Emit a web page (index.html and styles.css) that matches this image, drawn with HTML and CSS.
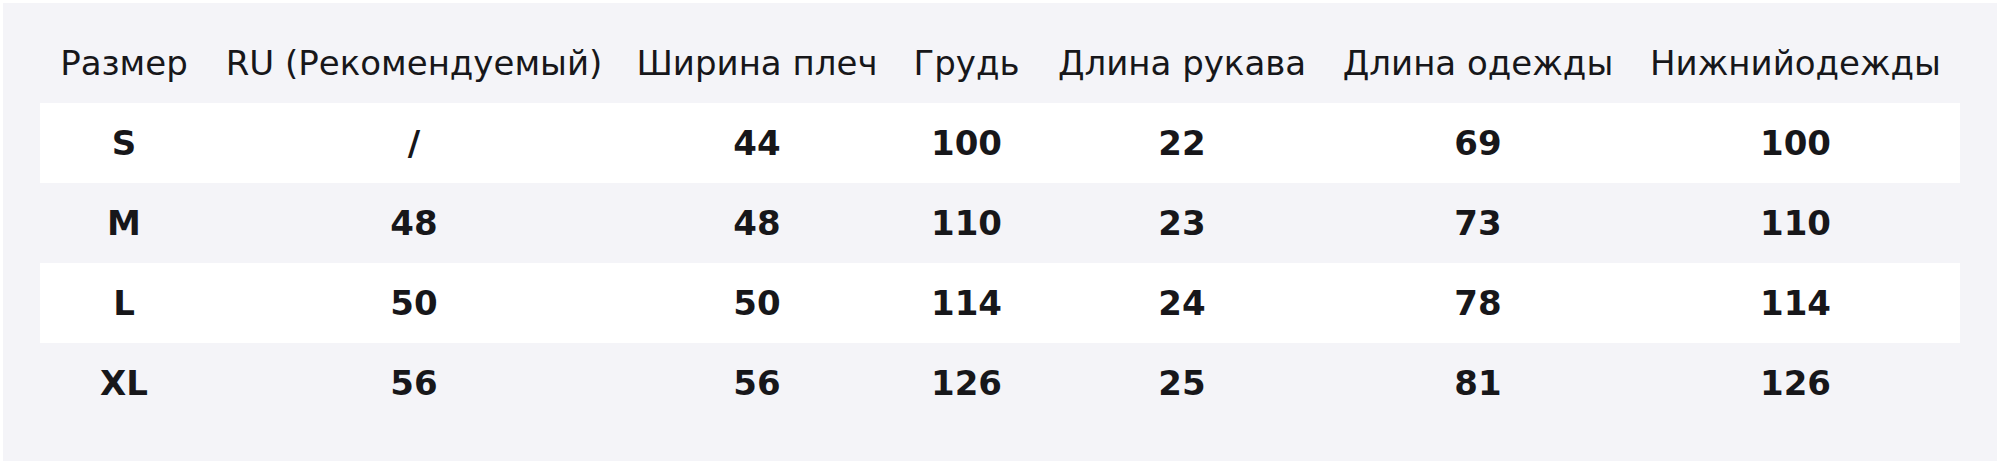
FILE: index.html
```html
<!DOCTYPE html>
<html lang="ru">
<head>
<meta charset="utf-8">
<title>Размерная таблица</title>
<link rel="stylesheet" href="styles.css">
</head>
<body>
<div class="page">
  <div class="panel">
    <table class="size-table">
      <colgroup>
        <col class="c1"><col class="c2"><col class="c3"><col class="c4"><col class="c5"><col class="c6"><col class="c7">
      </colgroup>
      <thead>
        <tr>
          <th>Размер</th>
          <th>RU (Рекомендуемый)</th>
          <th>Ширина плеч</th>
          <th>Грудь</th>
          <th>Длина рукава</th>
          <th>Длина одежды</th>
          <th>Нижнийодежды</th>
        </tr>
      </thead>
      <tbody>
        <tr class="odd"><td>S</td><td>/</td><td>44</td><td>100</td><td>22</td><td>69</td><td>100</td></tr>
        <tr><td>M</td><td>48</td><td>48</td><td>110</td><td>23</td><td>73</td><td>110</td></tr>
        <tr class="odd"><td>L</td><td>50</td><td>50</td><td>114</td><td>24</td><td>78</td><td>114</td></tr>
        <tr><td>XL</td><td>56</td><td>56</td><td>126</td><td>25</td><td>81</td><td>126</td></tr>
      </tbody>
    </table>
  </div>
</div>
</body>
</html>
```

FILE: styles.css
```css
html, body {
  margin: 0;
  padding: 0;
  background: #ffffff;
}

.page {
  padding: 3px;
}

.panel {
  background: #f4f4f8;
  padding: 20px 37px 38px;
}

.size-table {
  width: 100%;
  border-collapse: collapse;
  table-layout: fixed;
  font-family: "DejaVu Sans", Verdana, sans-serif;
  font-size: 34px;
  color: #17171a;
}

.c1 { width: 168px; }
.c2 { width: 412px; }
.c3 { width: 274px; }
.c4 { width: 145px; }
.c5 { width: 286px; }
.c6 { width: 306px; }
.c7 { width: 329px; }

.size-table th,
.size-table td {
  height: 80px;
  padding: 0;
  text-align: center;
  vertical-align: middle;
  white-space: nowrap;
}

.size-table th {
  font-weight: normal;
}

.size-table td {
  font-weight: bold;
}

.size-table tr.odd {
  background: #ffffff;
}
```
